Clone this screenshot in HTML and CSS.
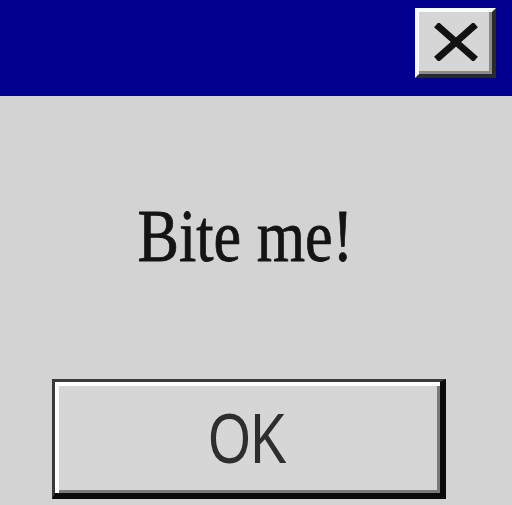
FILE: index.html
```html
<!DOCTYPE html>
<html lang="en">
<head>
    <meta charset="UTF-8">
    <meta name="viewport" content="width=device-width, initial-scale=1.0">
    <title>Message</title>
    <link rel="stylesheet" href="styles.css">
</head>
<body>
    <div class="window">
        <div class="titlebar">
            <button class="close" type="button" aria-label="Close">
                <svg width="44" height="38" viewBox="0 0 44 38">
                    <path d="M5 4 L39 34 M39 4 L5 34" stroke="#111" stroke-width="7" stroke-linecap="square"/>
                </svg>
            </button>
        </div>
        <div class="content">
            <p class="message">Bite me!</p>
            <button class="ok" type="button"><span>OK</span></button>
        </div>
    </div>
</body>
</html>
```

FILE: styles.css
```css
body {
    margin: 0;
    padding: 0;
    background: #d3d3d3;
}
.window {
    width: 512px;
    height: 505px;
    display: flex;
    flex-direction: column;
    overflow: hidden;
}
.titlebar {
    height: 96px;
    flex: none;
    background: #00008c;
    display: flex;
    justify-content: flex-end;
    align-items: flex-start;
    padding: 8px 16px 0 0;
    box-sizing: border-box;
}
.close {
    width: 81px;
    height: 70px;
    padding: 0;
    background: #d6d6d6;
    border: 4px solid;
    border-color: #fafafa #2a2a2a #2a2a2a #fafafa;
    box-shadow: inset -3px -3px 0 #8a8a8a;
    display: flex;
    align-items: center;
    justify-content: center;
}
.close svg {
    display: block;
    margin: 0 0 2px 0;
}
.content {
    flex: 1;
    background: #d3d3d3;
    display: flex;
    flex-direction: column;
    align-items: center;
    padding-top: 95px;
}
.message {
    margin: 0;
    font-family: "Liberation Serif", "DejaVu Serif", serif;
    font-size: 74px;
    line-height: 90px;
    color: #141414;
    -webkit-text-stroke: 0.8px #141414;
    transform: scaleX(0.84);
    margin-left: -22px;
}
.ok {
    margin-top: 98px;
    margin-left: -14px;
    width: 394px;
    height: 120px;
    padding: 0;
    background: #d6d6d6;
    border: 3px solid;
    border-color: #3a3a3a #0a0a0a #0a0a0a #3a3a3a;
    border-width: 3px 6px 6px 3px;
    box-shadow: inset 4px 4px 0 #ffffff, inset -3px -3px 0 #7a7a7a;
    display: flex;
    align-items: center;
    justify-content: center;
}
.ok span {
    font-family: "Liberation Sans", Arial, sans-serif;
    font-size: 70px;
    line-height: 70px;
    color: #2e2e2e;
    transform: scaleX(0.78);
    display: block;
    margin-top: 2px;
}
```
